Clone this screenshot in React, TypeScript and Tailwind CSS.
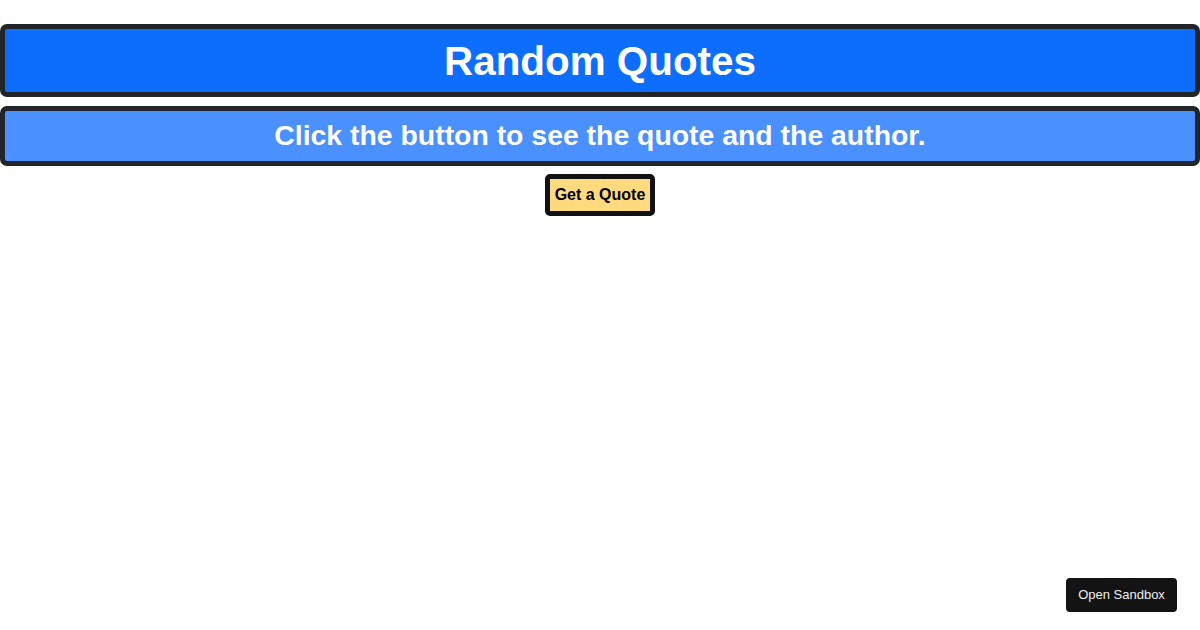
export default function App() {
  const font = { fontFamily: '"Liberation Sans", Arial, Helvetica, sans-serif' };
  return (
    <div className="relative min-h-[630px] w-full bg-white" style={font}>
      <div className="flex flex-col items-center pt-[24px]">
        <h1 className="flex h-[73px] w-full items-center justify-center rounded-[7px] border-[5px] border-[#212529] bg-[#0d6efd] pt-[2px] text-[40.4px] font-bold leading-none text-white">
          Random Quotes
        </h1>
        <h2 className="mt-[9px] flex h-[60px] w-full items-center justify-center rounded-[7px] border-[5px] border-[#212529] bg-[#4a90ff] pb-[2px] text-[28.4px] font-bold leading-none text-white">
          Click the button to see the quote and the author.
        </h2>
        <button className="mt-[8px] flex h-[42px] w-[110px] items-center justify-center rounded-[5px] border-[5px] border-[#111] bg-[#ffda7e] text-[16px] font-bold text-black">
          Get a Quote
        </button>
      </div>
      <div className="absolute left-[1066px] top-[578px] flex h-[34px] w-[111px] items-center justify-center rounded-[4px] bg-[#131313] text-[13px] text-[#eee]">
        Open Sandbox
      </div>
    </div>
  );
}
